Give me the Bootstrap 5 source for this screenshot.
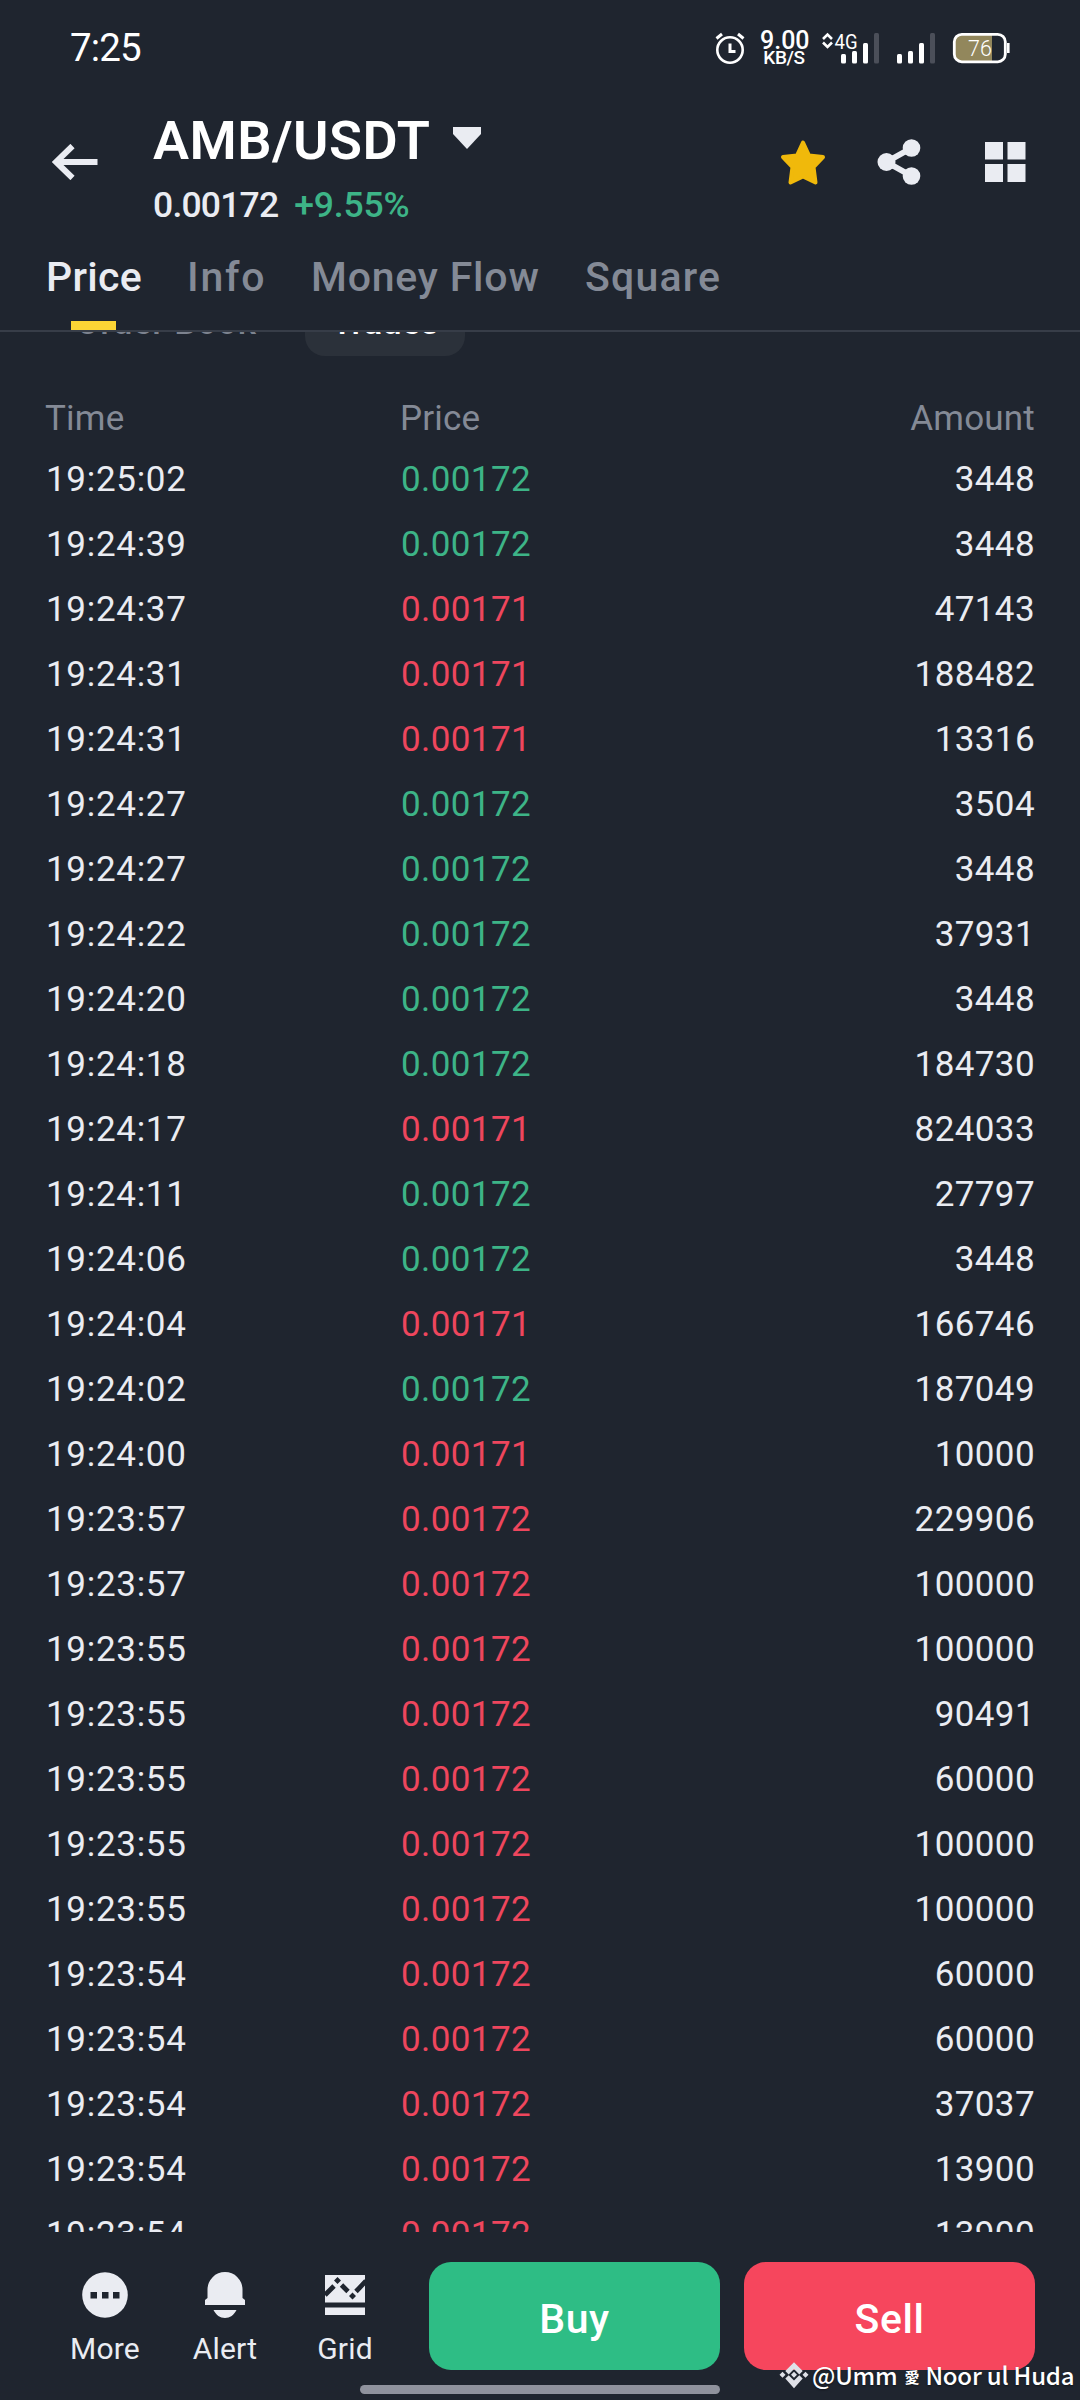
<!DOCTYPE html>
<html lang="en">
<head>
<meta charset="utf-8">
<meta name="viewport" content="width=device-width, initial-scale=1">
<title>AMB/USDT</title>
<link rel="stylesheet" href="https://cdn.jsdelivr.net/npm/bootstrap@5.3.0/dist/css/bootstrap.min.css">
<style>
body{background:#1f252f;color:#eaecf2;font-family:Roboto,"Liberation Sans",sans-serif;font-size:35px;line-height:1;width:1080px;height:2400px;overflow:hidden}
svg{display:block;flex:none}
.ink-muted{color:#848a96}
.ink-up{color:#3db487}
.ink-down{color:#ee465d}
.statusbar{height:96px;padding:0 69px 0 70px;color:#fff}
.status-clock{font-size:38.5px;letter-spacing:-.9px}
.status-icons{height:36px}
.net-speed{width:48px;margin:0 14px 0 15px;white-space:nowrap}
.speed-num{font-size:25px;font-weight:500;line-height:19px}
.speed-unit{font-size:19px;font-weight:500;line-height:16px;letter-spacing:-.4px}
.pairhead{height:144px;padding:0 53px 0 52px}
.back-arrow{margin-top:48px}
.pair-block{margin-left:55px;padding-top:17px;width:342px}
.pair-name{font-size:54px;font-weight:600;color:#fff;letter-spacing:.5px;line-height:55px}
.pair-caret{margin:-6px 0 0 23px}
.pair-price{font-size:35.5px;font-weight:500;line-height:36px;margin-top:19px;letter-spacing:-.8px}
.pair-change{letter-spacing:-.2px;margin-left:16px}
.head-tools{padding-top:42px}
.share-icon{margin:0 64px 0 50px}
.tabstrip{height:92px;padding-left:46px;border-bottom:2px solid #373d48;background:#1f252f}
.tab-label{font-size:41px;font-weight:500;line-height:75px;color:#848a96;white-space:nowrap}
.tab-label.current{color:#eaecf2;width:141px;letter-spacing:.3px}
.tab-mark{width:45px;height:9px;background:#fcd535;left:71px;bottom:0;z-index:2}
.tab-info{width:124px;letter-spacing:1.8px}
.tab-flow{width:274px;letter-spacing:.8px}
.tab-square{letter-spacing:1.2px}
.scroll-area{height:1900px;overflow:hidden}
.subtabs{height:68px;margin-top:-44px;padding-left:46px}
.subtab{height:68px;line-height:70px;font-size:35px;font-weight:500;border-radius:20px;text-align:center;white-space:nowrap}
.subtab.book{width:240px;color:#7d838f;margin-right:19px;letter-spacing:.5px}
.subtab.picked{width:160px;background:#2b313a;color:#fff}
.trade-head{height:50px;margin:37px 0 4px;padding:0 45px;letter-spacing:.2px}
.trade-line{height:65px;padding:0 45px 0 46px;letter-spacing:.4px}
.c-time{width:355px}
.trade-line .c-time{letter-spacing:.7px}
.c-price{width:300px}
.bottombar{height:168px;padding:30px 45px 0 60px}
.quick{width:90px;margin-right:30px;padding-top:10px}
.quick-label{font-size:30px;line-height:30px;margin-top:16px;white-space:nowrap;letter-spacing:.2px}
.trade-btn{width:291px;height:108px;border-radius:22px;border:0;font-size:41px;font-weight:500;color:#fff;line-height:108px;padding:3px 0 0;letter-spacing:.6px}
.buy-btn{background:#2ebd85;margin-right:24px}
.sell-btn{background:#f6465d}
.homebar{width:360px;height:9px;border-radius:5px;background:#8f929d;left:360px;top:2385px}
.watermark{left:779px;top:2358px;height:34px;color:#fff;font:24px/34px "Noto Sans CJK SC",sans-serif;font-weight:500;letter-spacing:-.2px;white-space:nowrap;text-shadow:0 1px 2px rgba(0,0,0,.45)}
.wm-mark{font-size:15px;font-weight:700;line-height:34px;width:15px;margin:3px 6px 0 7px}
.wm-user{margin-left:3px}
</style>
</head>
<body class="position-relative">
<header class="statusbar d-flex align-items-center justify-content-between">
  <span class="status-clock">7:25</span>
  <div class="status-icons d-flex align-items-center">
    <svg width="30" height="32" viewBox="0 0 30 32" fill="none" stroke="#fff" stroke-width="2.6"><circle cx="15" cy="18" r="12.7"/><path d="M15 11.5v8h5.5" stroke-width="3"/><path d="M1.500 6.500L7 2M23 2l5.500 4.500" stroke-width="3"/></svg>
    <div class="net-speed text-center"><div class="speed-num">9.00</div><div class="speed-unit">KB/S</div></div>
    <svg width="58" height="36" viewBox="0 0 58 36" fill="#fff"><path d="M1 9l4.500-4.500L10 9M1 12.500l4.500 4.500L10 12.500" fill="none" stroke="#fff" stroke-width="2.600"/><text x="12.500" y="18.500" font-size="20" textLength="23" lengthAdjust="spacingAndGlyphs">4G</text><rect x="19" y="24" width="5" height="9.500" rx="1.500"/><rect x="30" y="21" width="5" height="12.500" rx="1.500"/><rect x="41" y="13" width="5" height="20.500" rx="1.500"/><rect x="52" y="3" width="5" height="30.500" rx="1.500" fill="#4b4f59"/></svg>
    <svg width="40" height="36" viewBox="0 0 40 36" fill="#fff" class="ms-3 me-3"><rect x="1" y="24" width="5" height="9.500" rx="1.500"/><rect x="12" y="21" width="5" height="12.500" rx="1.500"/><rect x="23" y="13" width="5" height="20.500" rx="1.500"/><rect x="34" y="3" width="5" height="30.500" rx="1.500" fill="#4b4f59"/></svg>
    <svg width="59" height="36" viewBox="0 0 59 36"><path d="M10 4H40V32H10Q3 32 3 25V11Q3 4 10 4" fill="#92875c"/><rect x="2.300" y="4.300" width="51" height="27.500" rx="7.500" fill="none" stroke="#fff" stroke-width="2.800"/><path d="M56.300 13v10" stroke="#fff" stroke-width="2.600"/><text x="16" y="25.500" font-size="21.500" font-weight="300" fill="#fff" textLength="24">76</text></svg>
  </div>
</header>
<div class="pairhead d-flex">
  <svg class="back-arrow" width="46" height="36" viewBox="0 0 46 36" fill="none" stroke="#eaecf2" stroke-width="6"><path d="M20.500 2L4 18l16.500 16M5 18h40.500"/></svg>
  <div class="pair-block">
    <div class="d-flex align-items-center"><span class="pair-name">AMB/USDT</span><svg class="pair-caret" width="28" height="22" viewBox="0 0 28 22"><path d="M0 0h28v7L14 22 0 7z" fill="#eaecf2"/></svg></div>
    <div class="pair-price"><span>0.00172</span><span class="ink-up pair-change">+9.55%</span></div>
  </div>
  <div class="head-tools d-flex ms-auto">
    <svg width="48" height="48" viewBox="0 0 48 48"><path d="M24 4.500l6 13 14 1.500-9.500 10L36.500 44.500 24 38.500 11.500 44.500l2-15.500L4 19 18 17.500z" fill="#f0b90b" stroke="#f0b90b" stroke-width="4" stroke-linejoin="round"/></svg>
    <svg class="share-icon" width="44" height="48" viewBox="0 0 44 48" fill="#eaecf2"><path d="M34.500 10L9.500 24l25 14" fill="none" stroke="#eaecf2" stroke-width="6"/><circle cx="9.500" cy="24" r="9"/><circle cx="34.500" cy="10" r="8.800"/><circle cx="34.500" cy="38" r="8.800"/></svg>
    <svg width="42" height="48" viewBox="0 0 42 48" fill="#eaecf2"><path d="M0 4h18v17.500H0zM22.500 4h18v17.500h-18zM0 26h18v18H0zM22.500 26h18v18h-18z"/></svg>
  </div>
</div>
<nav class="tabstrip d-flex position-relative">
  <span class="tab-label current">Price</span><span class="tab-label tab-info">Info</span><span class="tab-label tab-flow">Money Flow</span><span class="tab-label tab-square">Square</span>
  <span class="tab-mark position-absolute"></span>
</nav>
<main class="scroll-area">
  <div class="subtabs d-flex"><span class="subtab book">Order Book</span><span class="subtab picked">Trades</span></div>
  <div class="trade-head ink-muted d-flex align-items-center"><span class="c-time">Time</span><span class="c-price">Price</span><span class="ms-auto">Amount</span></div>
  <div id="tradeRows"></div>
</main>
<footer class="bottombar d-flex align-items-start">
  <div class="quick d-flex flex-column align-items-center"><svg width="46" height="46" viewBox="0 0 46 46"><circle cx="23" cy="23" r="22.800" fill="#eaecf2"/><path d="M8.500 20h6.500v6.500H8.500zM20 20h6.500v6.500H20zM31 20h6.500v6.500H31z" fill="#1f252f"/></svg><span class="quick-label">More</span></div>
  <div class="quick d-flex flex-column align-items-center"><svg width="40" height="46" viewBox="0 0 40 46" fill="#eaecf2"><path d="M2.500 26V17.500a17.500 17.500 0 0 1 35 0V26l2.500 2v5H0v-5zM8.500 38h23C29 43 25 46 20 46S11 43 8.500 38z"/></svg><span class="quick-label">Alert</span></div>
  <div class="quick d-flex flex-column align-items-center"><svg width="40" height="46" viewBox="0 0 40 46"><path d="M0 3h40v27.500H0zM0 35.500h40V43H0z" fill="#eaecf2"/><path d="M0 23L9 14M16.500 13l6.500 6.500M31 19.500L41 9" fill="none" stroke="#1f252f" stroke-width="4.800"/><path d="M12.500 5l3.500 3.500-3.500 3.500L9 8.500zM27.500 20.500l3.500 3.500-3.500 3.500L24 24z" fill="#1f252f"/></svg><span class="quick-label">Grid</span></div>
  <div class="d-flex ms-auto"><button class="btn trade-btn buy-btn">Buy</button><button class="btn trade-btn sell-btn">Sell</button></div>
</footer>
<div class="homebar position-absolute"></div>
<div class="watermark position-absolute d-flex align-items-center"><svg width="30" height="30" viewBox="0 0 30 30" fill="#dfe1e8"><path d="M6.300 11.700L15 3l8.700 8.700-3.400 3.400L15 9.800l-5.300 5.300zM6.300 19.300l3.400-3.400L15 21.200l5.300-5.300 3.400 3.400L15 29z" transform="translate(0 -.7)"/><path d="M15 11.800l3 3-3 3-3-3zM3.500 11.800l3 3-3 3-3-3zM26.500 11.800l3 3-3 3-3-3z"/></svg><span class="wm-user">@Umm</span><span class="wm-mark">愛</span><span>Noor ul Huda</span></div>
<script>
const trades = `19:25:02 u 3448
19:24:39 u 3448
19:24:37 d 47143
19:24:31 d 188482
19:24:31 d 13316
19:24:27 u 3504
19:24:27 u 3448
19:24:22 u 37931
19:24:20 u 3448
19:24:18 u 184730
19:24:17 d 824033
19:24:11 u 27797
19:24:06 u 3448
19:24:04 d 166746
19:24:02 u 187049
19:24:00 d 10000
19:23:57 s 229906
19:23:57 s 100000
19:23:55 s 100000
19:23:55 s 90491
19:23:55 s 60000
19:23:55 s 100000
19:23:55 s 100000
19:23:54 s 60000
19:23:54 s 60000
19:23:54 s 37037
19:23:54 s 13900
19:23:54 s 13900`.split("\n").map(r => r.split(" "));
document.getElementById("tradeRows").innerHTML = trades.map(([time, side, amount]) =>
  `<div class="trade-line d-flex align-items-center"><span class="c-time">${time}</span><span class="c-price ${side === "u" ? "ink-up" : "ink-down"}">${side === "d" ? "0.00171" : "0.00172"}</span><span class="ms-auto">${amount}</span></div>`).join("");
</script>
<script src="https://cdn.jsdelivr.net/npm/bootstrap@5.3.0/dist/js/bootstrap.bundle.min.js"></script>
</body>
</html>
